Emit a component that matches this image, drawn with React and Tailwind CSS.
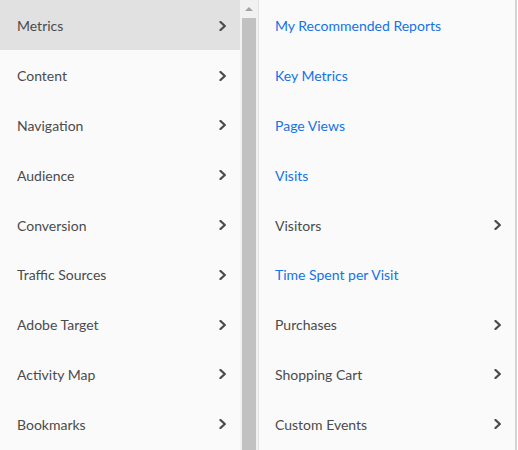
const left = [
  "Metrics",
  "Content",
  "Navigation",
  "Audience",
  "Conversion",
  "Traffic Sources",
  "Adobe Target",
  "Activity Map",
  "Bookmarks",
];

const right = [
  { label: "My Recommended Reports", link: true },
  { label: "Key Metrics", link: true },
  { label: "Page Views", link: true },
  { label: "Visits", link: true },
  { label: "Visitors", sub: true },
  { label: "Time Spent per Visit", link: true },
  { label: "Purchases", sub: true },
  { label: "Shopping Cart", sub: true },
  { label: "Custom Events", sub: true },
];

function Chevron() {
  return (
    <svg width="8" height="10" viewBox="0 0 8 10" className="text-[#4b4b4b]">
      <polyline
        points="1.5,1 5.8,5 1.5,9"
        fill="none"
        stroke="currentColor"
        strokeWidth="2.3"
        strokeLinecap="round"
        strokeLinejoin="round"
      />
    </svg>
  );
}

function Row({ label, active, link, sub, pl }) {
  return (
    <div
      className={
        "h-[49.8px] flex items-center justify-between pt-[2px] pr-[13px] text-[14px] " +
        pl +
        (active ? " bg-[#e1e1e1] " : " ") +
        (link ? "text-[#1473e6]" : "text-[#4b4b4b]")
      }
    >
      <span>{label}</span>
      {sub && <Chevron />}
    </div>
  );
}

export default function App() {
  return (
    <div
      className="w-[518px] h-[450px] overflow-hidden flex bg-white"
      style={{ fontFamily: 'Lato, "Noto Sans", sans-serif' }}
    >
      <div className="w-[240px] bg-[#fafafa]">
        {left.map((l, i) => (
          <Row key={l} label={l} active={i === 0} sub pl="pl-[17px]" />
        ))}
      </div>
      <div className="w-[18px] bg-[#f1f1f1] flex flex-col items-center">
        <div className="h-[18px] w-full flex items-center justify-center">
          <div className="w-0 h-0 border-l-[4px] border-r-[4px] border-b-[4px] border-l-transparent border-r-transparent border-b-[#a3a3a3]" />
        </div>
        <div className="flex-1 w-[14px] bg-[#c1c1c1]" />
      </div>
      <div className="w-[259px] bg-[#fafafa] border-l border-[#e1e1e1] border-r-2 border-r-[#d4d4d4]">
        {right.map((r) => (
          <Row key={r.label} {...r} pl="pl-[16px]" />
        ))}
      </div>
    </div>
  );
}
